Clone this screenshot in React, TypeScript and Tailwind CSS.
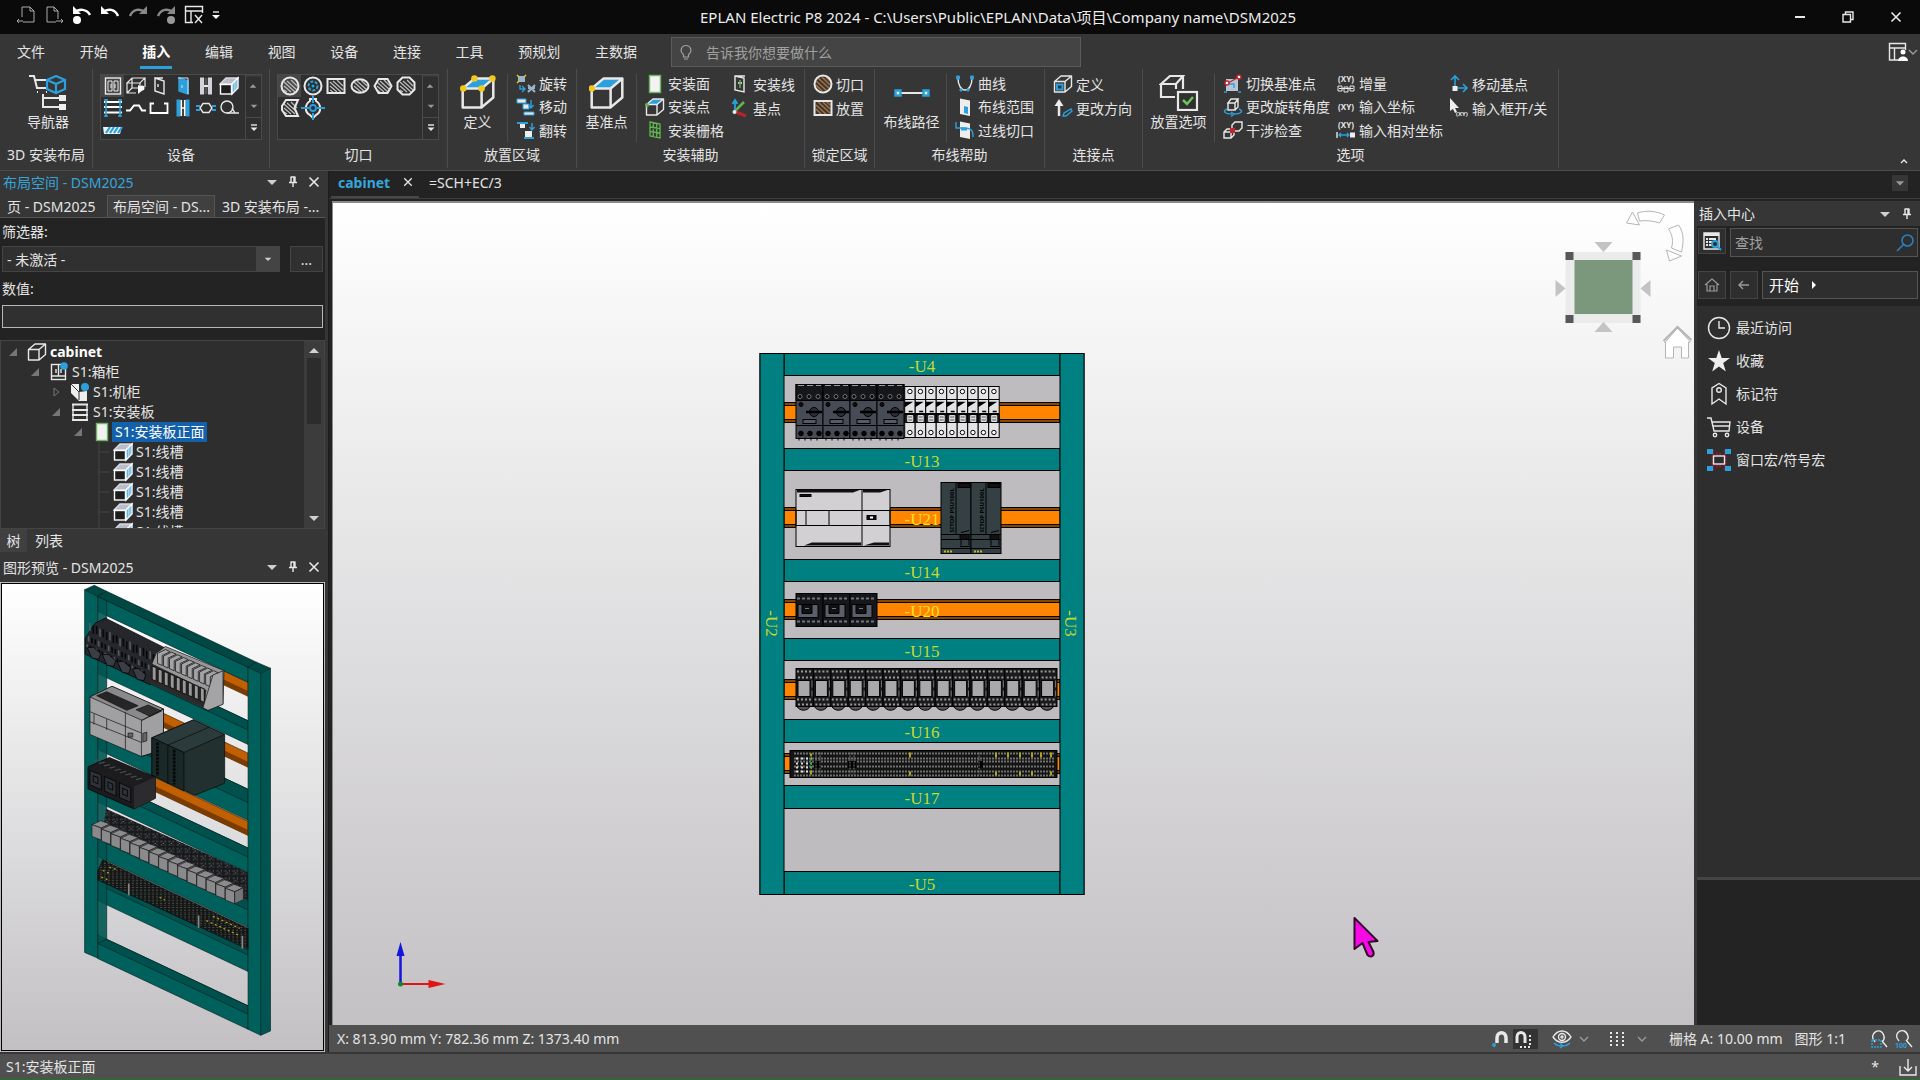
import { useState } from 'react';
import type { ReactNode } from 'react';

type IconProps = { children: ReactNode; className?: string; box?: string };

function Icon({ children, className = 'w-5 h-5', box = '0 0 20 20' }: IconProps) {
  return (
    <svg className={`${className} shrink-0`} viewBox={box} fill="none" stroke="#e8e8e8" strokeWidth="1.4" aria-hidden="true">
      {children}
    </svg>
  );
}

const BLUE = '#2ba0dc';
const menu = ['文件', '开始', '插入', '编辑', '视图', '设备', '连接', '工具', '预规划', '主数据'];

/* ---------- shared icons ---------- */

const IconPin = () => (
  <Icon className="w-3 h-3" box="0 0 12 12">
    <path d="M3.5 1h5M4 1v5M8 1v5M7 1v5M2 6.5h8M6 7v4" />
  </Icon>
);

const IconClose = ({ className = 'w-3 h-3' }) => (
  <Icon className={className} box="0 0 12 12"><path d="M1.5 1.5l9 9M10.5 1.5l-9 9" strokeWidth="1.6" /></Icon>
);

const IconCaret = ({ className = 'w-3 h-3', fill = '#d0d0d0' }) => (
  <Icon className={className} box="0 0 12 12"><path d="M1 4h10L6 9z" fill={fill} stroke="none" /></Icon>
);

const IconChevron = ({ up = false }) => (
  <Icon className="w-2.5 h-2.5" box="0 0 10 10"><path d={up ? 'M2 7l3-3 3 3' : 'M1 3l4 4 4-4'} stroke={up ? '#e8e8e8' : '#999'} /></Icon>
);

const Cube = ({ top = 'none', dot = false, stroke = '#e8e8e8' }) => (
  <g stroke={stroke} strokeLinejoin="round">
    <path d="M1.5 7.5L8 2h10.5L12 7.5z" fill={top} />
    <path d="M1.5 7.5V18H12V7.5M12 18l6.500-5.500V2" />
    {dot && <circle cx="1.5" cy="7.5" r="1.8" fill="#f4c81e" stroke="none" />}
  </g>
);

const IconDuct = () => (
  <Icon className="w-5 h-5">
    <path d="M1 8l6-6h12l-6 6z" fill="#b9bcc9" stroke="#d8dae2" />
    <path d="M13 8l6-6v10l-6 6z" fill={BLUE} stroke="#fff" />
    <path d="M15.200 6v10M17 4.500v9" strokeWidth="1" />
    <rect x="1.5" y="8.5" width="11" height="9.5" fill="#1e1e1e" stroke="#fff" />
  </Icon>
);

/* ---------- galleries ---------- */

const deviceIcons: ReactNode[] = [
  <Icon><rect x="2.5" y="2" width="15" height="16" /><path d="M5 5h4v10H5zM11 5h4v10h-4zM8 8v4M12 8v4" strokeWidth="1" /></Icon>,
  <Icon><path d="M1 7l5-5h13l-5 5zM1 7v10h9M14 7v4M19 2v9M6 2v10l-5 5M6 12h6" strokeWidth="1.2" /><path d="M12 9l6 4-6 5z" fill="#fff" stroke="none" /><circle cx="16" cy="12" r="2.5" fill="#fff" stroke="none" /></Icon>,
  <Icon><path d="M6 2l9 3v13l-9-3zM6 2h8M9 8v3" /></Icon>,
  <Icon><path d="M6 2l9 3v13l-9-3z" fill={BLUE} stroke={BLUE} /><path d="M5 2h10v16M9 9v3" stroke="#d8ecf8" strokeWidth="1" /></Icon>,
  <Icon><path d="M6 1.500v17M14 1.500v17" stroke="#d3d3dc" strokeWidth="4" /><path d="M10 2v16" stroke="#555" strokeWidth="3" /><path d="M8 10h4" strokeWidth="2" /></Icon>,
  <IconDuct />,
  <Icon><path d="M1 4h18M1 9h18M1 14.500h18" stroke="#fff" strokeWidth="2" /><path d="M3 1v18M17 1v18M1 2h4M1 18h4M15 2h4M15 18h4" stroke={BLUE} strokeWidth="1.6" /></Icon>,
  <Icon><path d="M0 12.500h4l4-5h5l3 5h4" strokeWidth="2" stroke="#fff" /></Icon>,
  <Icon><path d="M5 5.500H1.500V15h17V5.500H15" stroke="#fff" strokeWidth="1.8" /></Icon>,
  <Icon><path d="M5.500 1.500v17M14.500 1.500v17" stroke={BLUE} strokeWidth="4" /><path d="M8.300 2v16M11.700 2v16M8 10h4" stroke="#fff" strokeWidth="1.6" /></Icon>,
  <Icon><path d="M4 10l3-4.500h6l3 4.500-3 4.500H7z" /><path d="M0 8h4M0 12h4M16 8h4M16 12h4" stroke={BLUE} strokeWidth="2" /></Icon>,
  <Icon><circle cx="8" cy="9" r="6" /><path d="M8 15h12M13 10l3 5" /></Icon>,
  <Icon><path d="M0 7h19l-2 7H1z" fill="#e8f4fb" stroke="none" /><path d="M3 13l4-6M7 13l4-6M11 13l4-6M15 13l4-6" stroke={BLUE} strokeWidth="2.2" /></Icon>,
];

const hatch = <path d="M4 6l11 10M4 10l7 6M7 5l10 9M11 4l6 6M4 14l3 2" strokeWidth="1.3" stroke="#bbb" />;

const cutoutIcons: ReactNode[] = [
  <Icon>{hatch}<circle cx="10" cy="10" r="8.5" strokeWidth="2" /></Icon>,
  <Icon><circle cx="10" cy="10" r="8.5" strokeWidth="2" /><circle cx="10" cy="10" r="4.5" stroke={BLUE} strokeDasharray="3 1.5" strokeWidth="2" /><circle cx="10" cy="10" r="1.5" fill={BLUE} stroke="none" /></Icon>,
  <Icon>{hatch}<rect x="1.5" y="3" width="17" height="14" strokeWidth="2" /></Icon>,
  <Icon>{hatch}<ellipse cx="10" cy="10" rx="8.5" ry="6.8" strokeWidth="2" /></Icon>,
  <Icon>{hatch}<path d="M1.500 10l4-7h9l4 7-4 7h-9z" strokeWidth="2" /></Icon>,
  <Icon>{hatch}<path d="M6.500 1.500h7l5 5v7l-5 5h-7l-5-5v-7z" strokeWidth="2" /></Icon>,
  <Icon>{hatch}<path d="M6 2h12l-3.500 8L18 18H6l-4-6V8z" strokeWidth="2" /></Icon>,
  <Icon className="w-6 h-6" box="0 0 24 24"><path d="M9 5V3h6v2c5 3 6 11 0 14l-3 3-3-3c-6-3-5-11 0-14z" strokeWidth="2" /><circle cx="12" cy="12" r="3" stroke={BLUE} strokeWidth="1.8" /><path d="M0 12h8M16 12h8M12 0v7M12 17v7" stroke={BLUE} strokeWidth="2" /></Icon>,
];

function Gallery({ icons, label }: { icons: ReactNode[]; label: string }) {
  return (
    <div className="flex justify-between border border-[#4a4a4a] bg-[#2f2f2f] h-[66px] w-[162px]" aria-label={label}>
      <div className="grid grid-cols-6 auto-rows-[22px] w-[140px]">
        {icons.map((icon, i) => (
          <button key={i} className={`flex items-center justify-center ${i === 0 ? 'bg-[#474747]' : ''}`}>{icon}</button>
        ))}
      </div>
      <div className="grid grid-rows-3 w-4 border-l border-[#4a4a4a] divide-y divide-[#4a4a4a]">
        <button className="flex items-center justify-center rotate-180"><IconCaret className="w-2 h-2" fill="#999" /></button>
        <button className="flex items-center justify-center"><IconCaret className="w-2 h-2" fill="#999" /></button>
        <button className="flex items-center justify-center">
          <Icon className="w-2.5 h-2.5" box="0 0 10 10"><path d="M2 2h6" /><path d="M1.500 4.500h7L5 8z" fill="#e8e8e8" stroke="none" /></Icon>
        </button>
      </div>
    </div>
  );
}

/* ---------- ribbon ---------- */

function Small({ icon, text }: { icon: ReactNode; text: string }) {
  return (
    <button className="flex items-center gap-[3px] h-6 whitespace-nowrap">
      <Icon>{icon}</Icon>
      <span>{text}</span>
    </button>
  );
}

function Big({ icon, text, className = 'w-[59px]' }: { icon: ReactNode; text: string; className?: string }) {
  return (
    <button className={`flex flex-col items-center gap-px pt-[3px] whitespace-nowrap ${className}`}>
      {icon}
      <span className="leading-5">{text}</span>
    </button>
  );
}

function Group({ title, className, children }: { title: string; className: string; children: ReactNode }) {
  return (
    <section className={`flex flex-col border-r border-[#4c4c4c] h-[99px] shrink-0 ${className}`}>
      <div className="flex items-start pt-[3px] h-[76px]">{children}</div>
      <h2 className="text-center leading-5 whitespace-nowrap">{title}</h2>
    </section>
  );
}

const Items = ({ children, line = false }: { children: ReactNode; line?: boolean }) => (
  <div className={`flex gap-[6px] pl-2 h-[68px] mt-[2px] ${line ? 'border-l border-[#4c4c4c]' : ''}`}>{children}</div>
);

const Col = ({ children }: { children: ReactNode }) => <div className="flex flex-col items-start -mt-[2px]">{children}</div>;

const xy = (y: number) => (
  <text x="10" y={y} fontSize="8" fontWeight="700" textAnchor="middle" fill="#e8e8e8" stroke="none">(XY)</text>
);

const rustHatch = <path d="M3 7l11 10M3 11l6 6M5 4l12 11M9 3l8 8M13 3l4 4" stroke="#a8703c" strokeWidth="1.6" />;

const boxes = (
  <path d="M1 2h9v4H1zM7 7h6v5H7zM8 15h10v3H8z" fill="#e8e8e8" stroke={BLUE} strokeWidth="1" />
);

function Ribbon() {
  return (
    <div className="flex items-start h-[101px]">
      <Group title="3D 安装布局" className="w-[93px]">
        <Big
          className="w-full pl-1"
          text="导航器"
          icon={
            <Icon className="w-10 h-9" box="0 0 40 36">
              <path d="M1 1h5l3 12h9M7 5h11M9 17h1M18 17h1" strokeWidth="2" />
              <path d="M19 5l9-4 9 4v9l-9 4-9-4zM19 5l9 4 9-4M28 9v9" stroke={BLUE} strokeWidth="2.2" />
              <path d="M15 19v13h16M15 23h16" strokeWidth="2" />
              <path d="M31 20h7v6h-7zM31 29h7v6h-7z" fill="#eee" stroke="none" />
            </Icon>
          }
        />
      </Group>
      <Group title="设备" className="w-[177px] px-[7px]">
        <div className="pt-[2px]"><Gallery icons={deviceIcons} label="设备" /></div>
      </Group>
      <Group title="切口" className="w-[178px] px-[7px]">
        <div className="pt-[2px]"><Gallery icons={cutoutIcons} label="切口" /></div>
      </Group>
      <Group title="放置区域" className="w-[129px]">
        <Big
          text="定义"
          icon={
            <Icon className="w-9 h-9">
              <Cube top={BLUE} />
              <g fill="#f4c81e" stroke="none">
                <circle cx="1.8" cy="7.5" r="1.8" /><circle cx="12" cy="7.5" r="1.8" /><circle cx="8" cy="2" r="1.8" /><circle cx="18" cy="2" r="1.8" />
              </g>
            </Icon>
          }
        />
        <Items line>
          <Col>
            <Small text="旋转" icon={<><rect x="2" y="2" width="7" height="6" fill="#9ab4cc" stroke="none" /><path d="M1 1l2 2M10 1L8 3M1 9l2-2" stroke="#f4c81e" /><path d="M4 11v4h5M6 12l3 3-3 3" stroke={BLUE} /><path d="M12 11l7 7M19 11l-7 7M12 14h7" stroke="#9ab4cc" strokeWidth="2" /></>} />
            <Small text="移动" icon={<>{boxes}<path d="M15 3v7M12.500 8l2.500 3 2.500-3" stroke={BLUE} /></>} />
            <Small text="翻转" icon={<><path d="M1 3h11M8 18h10" stroke={BLUE} strokeWidth="2" /><rect x="4" y="4" width="5" height="4" fill="#eee" stroke="none" /><rect x="9" y="11" width="7" height="6" fill="#eee" stroke="none" /><path d="M16 3v6M13.500 7l2.500 3 2.500-3" stroke={BLUE} /></>} />
          </Col>
        </Items>
      </Group>
      <Group title="安装辅助" className="w-[228px]">
        <Big text="基准点" icon={<Icon className="w-9 h-9"><Cube top={BLUE} dot /></Icon>} />
        <Items line>
          <Col>
            <Small text="安装面" icon={<rect x="4.5" y="1.5" width="11" height="17" fill="#f2f2f2" stroke="#6cb860" />} />
            <Small text="安装点" icon={<><Cube top={BLUE} /><circle cx="2" cy="8" r="2" fill="#5fb84f" stroke="none" /></>} />
            <Small text="安装栅格" icon={<path d="M5 2l10 2v14L5 16zM8.300 2.500v14M11.700 3.500v14M5 7l10 1.500M5 11.500l10 1.500" stroke="#5fb84f" strokeWidth="1.3" />} />
          </Col>
          <Col>
            <Small text="安装线" icon={<><path d="M5 2h10M5 2v14l9 2V4zM8 9h4" /><path d="M10 6v8" stroke="#5fb84f" /></>} />
            <Small text="基点" icon={<><path d="M4 14L14 4" stroke="#5fb84f" strokeWidth="2.5" /><path d="M5 14V3M2.500 6L5 2l2.500 4" stroke={BLUE} strokeWidth="1.8" /><path d="M6 14l10 4" stroke="#b8242c" strokeWidth="3.5" /><circle cx="4.5" cy="14" r="2" fill="#eee" stroke="none" /></>} />
          </Col>
        </Items>
      </Group>
      <Group title="锁定区域" className="w-[70px]">
        <Items>
          <Col>
            <Small text="切口" icon={<>{rustHatch}<circle cx="10" cy="10" r="8.5" strokeWidth="2" /></>} />
            <Small text="放置" icon={<>{rustHatch}<rect x="1.5" y="3" width="17" height="14" strokeWidth="2" /></>} />
          </Col>
        </Items>
      </Group>
      <Group title="布线帮助" className="w-[170px]">
        <Big
          className="w-[71px] pl-[2px]"
          text="布线路径"
          icon={
            <Icon className="w-10 h-9" box="0 0 40 36">
              <path d="M8 18h24" strokeWidth="2" />
              <path d="M3.500 15.500h5v5h-5zM31.500 15.500h5v5h-5z" fill="#eee" stroke={BLUE} strokeWidth="2.5" />
            </Icon>
          }
        />
        <Items line>
          <Col>
            <Small text="曲线" icon={<><path d="M3 4c0 16 14 16 14 0" /><path d="M1.500 2h3v3h-3zM15.500 2h3v3h-3zM5 15h2v2H5zM12 15h2v2h-2z" fill={BLUE} stroke={BLUE} strokeWidth="1" /></>} />
            <Small text="布线范围" icon={<><path d="M5 1.500l10 2V19L5 17z" fill="#eee" stroke="none" /><path d="M9 9l4 1v7l-4-1z" fill={BLUE} stroke="none" /></>} />
            <Small text="过线切口" icon={<><path d="M5 1.500l10 2V19L5 17z" fill="#eee" stroke="none" /><path d="M1 2v6h8c8 0 9 3 9 9" stroke={BLUE} /><path d="M6 9h6" stroke={BLUE} strokeWidth="3" /></>} />
          </Col>
        </Items>
      </Group>
      <Group title="连接点" className="w-[98px]">
        <Items>
          <Col>
            <Small text="定义" icon={<><Cube /><rect x="4" y="10.5" width="5.5" height="5" stroke={BLUE} strokeWidth="2" /></>} />
            <Small text="更改方向" icon={<><path d="M6 18V7" strokeWidth="2.5" /><path d="M1.500 8L6 1l4.500 7z" fill="#eee" stroke="none" /><path d="M10 18l1-3 7-4 1 2-6 5z" stroke={BLUE} /></>} />
          </Col>
        </Items>
      </Group>
      <Group title="选项" className="w-[416px]">
        <Big
          className="w-[71px]"
          text="放置选项"
          icon={
            <Icon className="w-10 h-9" box="0 0 40 36">
              <path d="M2 9l9-8h13l-7 8zM2 9v13h14M24 1v13M17 9v5" strokeWidth="2.2" />
              <rect x="19" y="17" width="19" height="18" fill="#303030" strokeWidth="2.2" />
              <path d="M24 25l4 4 6-7" stroke="#6cc45a" strokeWidth="2.5" />
            </Icon>
          }
        />
        <Items line>
          <Col>
            <Small text="切换基准点" icon={<><path d="M3 5h12v12H3z" fill="#b8c4d4" stroke="none" /><path d="M1 18h3M15 18h3M6 10h5v4" stroke={BLUE} /><path d="M5 9l11-6" stroke="#c4242c" /><circle cx="4" cy="9" r="2" fill="#fff" stroke="#c4242c" /><circle cx="16" cy="3" r="2" fill="#fff" stroke="#c4242c" /></>} />
            <Small text="更改旋转角度" icon={<><path d="M5 6l3-4h7l-3 4zM5 6v7h7V6M12 13l3-3V2" /><path d="M4 12c-5 2-2 5 5 5M16 12c5 2 2 5-5 5M8 15l3 2-3 2.500" stroke={BLUE} /></>} />
            <Small text="干涉检查" icon={<><path d="M1 12l3-3h7v6l-3 3H1zM8 18v-6H1M9 5l3-3h7v6l-3 3H9z" /><path d="M7 8h5v5H7z" fill="#c4242c" stroke="none" /></>} />
          </Col>
          <Col>
            <Small text="增量" icon={<>{xy(8)}<path d="M2 12h4v5H2zM8 13h4v5H8zM14 12h4v5h-4zM3 14.500h14" strokeWidth="1" /></>} />
            <Small text="输入坐标" icon={xy(13)} />
            <Small text="输入相对坐标" icon={<>{xy(8)}<path d="M1 12v6" /><path d="M3 15h9M5 13l-2 2 2 2M11 13l2 2-2 2" stroke={BLUE} /><rect x="14" y="12.5" width="5" height="5" fill="#eee" stroke="none" /></>} />
          </Col>
          <Col>
            <Small text="移动基点" icon={<><path d="M6 13V3M2 6l4-4 4 4M8 14h10M14 10l4 4-4 4" stroke={BLUE} strokeWidth="1.6" /><rect x="3.5" y="12" width="5" height="5" fill="#eee" stroke="none" /></>} />
            <Small text="输入框开/关" icon={<><path d="M1 0v13l3-2 2 4 2-1-2-4h4z" fill="#eee" stroke="none" /><text x="13" y="18" fontSize="6" fontWeight="700" textAnchor="middle" fill="#e8e8e8" stroke="none">(XY)</text></>} />
          </Col>
        </Items>
      </Group>
      <div className="flex-1 flex justify-end items-end self-stretch pr-[11px] pb-1">
        <button aria-label="折叠功能区"><IconChevron up /></button>
      </div>
    </div>
  );
}

function TitleBar() {
  return (
    <header className="flex items-center h-[34px] bg-[#0a0a0a] shrink-0">
      <div className="flex items-center gap-2 pl-4 pb-1">
        <Icon><path d="M6 12V2h8l4 4v11H7M14 2v4h4M1 16h6M3 14l-2 2 2 2" stroke="#aaa" strokeWidth="1" /></Icon>
        <Icon><path d="M12 17H3V2h7l4 4v8M10 2v4h4M12 16h7M17 14l2 2-2 2" stroke="#aaa" strokeWidth="1" /></Icon>
        <Icon><path d="M2 8c5-5 13-4 16 2" stroke="#fff" strokeWidth="2.5" /><path d="M1 1v8h8z" fill="#fff" stroke="none" /><circle cx="5" cy="15" r="4" fill="#fff" stroke="none" /></Icon>
        <Icon><path d="M3 7c5-4 12-3 15 4" stroke="#fff" strokeWidth="2.5" /><path d="M1 1v8h8z" fill="#fff" stroke="none" /></Icon>
        <Icon><path d="M17 7C12 3 5 4 2 11" stroke="#888" strokeWidth="2.5" /><path d="M19 1v8h-8z" fill="#888" stroke="none" /></Icon>
        <Icon><path d="M17 7C12 3 5 4 2 11" stroke="#888" strokeWidth="2.5" /><path d="M19 1v8h-8z" fill="#888" stroke="none" /><circle cx="15" cy="15" r="4" fill="#999" stroke="none" /></Icon>
        <Icon><path d="M18.500 8V1.500h-17v16H9M1.500 6h17M7 6v12M11 10l7 8M18 10l-7 8" /></Icon>
        <Icon className="w-2 h-3" box="0 0 8 12"><path d="M1 3h6" /><path d="M0 6h8L4 10z" fill="#fff" stroke="none" /></Icon>
      </div>
      <h1 className="flex-1 text-center text-[15px] leading-[34px] text-[#ededed] truncate">
        EPLAN Electric P8 2024 - C:\Users\Public\EPLAN\Data\项目\Company name\DSM2025
      </h1>
      <div className="flex">
        <button className="w-12 h-[34px] flex items-center justify-center" aria-label="最小化"><Icon className="w-3 h-3" box="0 0 12 12"><path d="M1 6h10" strokeWidth="2" /></Icon></button>
        <button className="w-12 h-[34px] flex items-center justify-center" aria-label="还原"><Icon className="w-3 h-3" box="0 0 12 12"><path d="M1 3.500h7.500V11H1zM3.500 3V1H11v7.500H9" /></Icon></button>
        <button className="w-12 h-[34px] flex items-center justify-center" aria-label="关闭"><IconClose /></button>
      </div>
    </header>
  );
}

function MenuBar() {
  return (
    <nav className="flex items-center h-[34px]">
      <div className="flex justify-between w-[639px] pl-[15px] self-stretch">
        {menu.map((m) => (
          <button
            key={m}
            className={`px-[2px] pt-px whitespace-nowrap border-b-[3px] ${m === '插入' ? 'border-[#2ba0dc] font-bold text-white' : 'border-transparent'}`}
          >
            {m}
          </button>
        ))}
      </div>
      <label className="flex items-center gap-3 ml-8 pl-[6px] w-[410px] h-[30px] bg-[#444] border border-[#5a5a5a]">
        <Icon className="w-4 h-4" box="0 0 16 16"><path d="M5.500 10.500C1 7 3.500 1.500 8 1.500s7 5.500 2.500 9V13h-5zM6 15h4" stroke="#a0a0a0" strokeWidth="1.2" /></Icon>
        <input className="bg-transparent flex-1 outline-none placeholder-[#a0a0a0]" placeholder="告诉我你想要做什么" />
      </label>
      <button className="flex items-center ml-auto pr-[2px]" aria-label="工作区">
        <Icon><path d="M17.500 8V1.500h-16V18H10M1.500 6h16M6.500 6v12" /><circle cx="15" cy="10" r="2.5" fill="#fff" stroke="none" /><path d="M10 19c0-6 10-6 10 0z" fill="#fff" stroke="none" /></Icon>
        <IconChevron />
      </button>
    </nav>
  );
}

/* ---------- left column ---------- */

function PanelHead({ title, active = false }: { title: string; active?: boolean }) {
  return (
    <div className="flex items-center h-[22px] pl-[3px] pr-[5px] shrink-0">
      <h2 className={`flex-1 ${active ? 'text-[#35a5dc]' : ''}`}>{title}</h2>
      <div className="flex gap-[9px] items-center">
        <button aria-label="菜单"><IconCaret /></button>
        <button aria-label="固定"><IconPin /></button>
        <button aria-label="关闭"><IconClose /></button>
      </div>
    </div>
  );
}

type TreeRow = { text: string; pad: string; arrow?: 'open' | 'closed'; icon: ReactNode; bold?: boolean; selected?: boolean };

const duct: TreeRow = { text: 'S1:线槽', pad: 'pl-[89px]', icon: <IconDuct /> };

const tree: TreeRow[] = [
  { text: 'cabinet', pad: 'pl-[3px]', arrow: 'open', bold: true, icon: <Icon><Cube /></Icon> },
  { text: 'S1:箱柜', pad: 'pl-[25px]', arrow: 'open', icon: <Icon><rect x="2.5" y="2.5" width="14" height="15" /><path d="M2.500 14h14M9.500 3v11M7 7v4M12 7v4" /><circle cx="15" cy="4" r="3.8" fill={BLUE} stroke="none" /></Icon> },
  { text: 'S1:机柜', pad: 'pl-[46px]', arrow: 'closed', icon: <Icon><path d="M1 2h8v8l8-1v10h-8l-8-8z" fill="#eee" stroke="none" /><path d="M9 18v-8L1 2" stroke="#333" strokeWidth="1" /><circle cx="15" cy="5" r="4" fill={BLUE} stroke="none" /></Icon> },
  { text: 'S1:安装板', pad: 'pl-[46px]', arrow: 'open', icon: <Icon><path d="M3 2v16M17 2v16" /><path d="M2 2.500h16M2 8h16M2 13h16M2 18h16" strokeWidth="2" /></Icon> },
  { text: 'S1:安装板正面', pad: 'pl-[68px]', arrow: 'open', selected: true, icon: <Icon><rect x="4.5" y="1.5" width="11" height="17" fill="#f2f2f2" stroke="#6cb860" /></Icon> },
  duct, duct, duct, duct, duct,
];

function Tree() {
  return (
    <div className="flex h-[189px] border border-[#444] bg-[#2e2e2e] overflow-hidden shrink-0">
      <ul className="flex-1 pt-px">
        {tree.map((row, i) => (
          <li key={i} className={`flex items-center gap-[3px] h-5 ${row.pad}`}>
            <svg className="w-5 h-5 shrink-0" viewBox="0 0 20 20" fill="none" stroke="#777">
              {row.arrow === 'open' && <path d="M13 6v8H5z" fill="#777" stroke="none" />}
              {row.arrow === 'closed' && <path d="M7 6v8l5-4z" />}
              {!row.arrow && <path d="M9 0v20M9 10h10" stroke="#444" />}
            </svg>
            {row.icon}
            <span className={`leading-5 whitespace-nowrap ${row.bold ? 'font-bold text-white' : ''} ${row.selected ? 'bg-[#1461ab] px-[3px] -ml-[3px] text-white' : ''}`}>{row.text}</span>
          </li>
        ))}
      </ul>
      <div className="w-5 flex flex-col items-center justify-between py-1 bg-[#3c3c3c]">
        <button className="rotate-180" aria-label="向上"><IconCaret /></button>
        <div className="flex-1 w-full px-[3px]"><div className="h-[66px] mt-px bg-[#2c2c2c]" /></div>
        <button aria-label="向下"><IconCaret /></button>
      </div>
    </div>
  );
}

const range = (n: number) => Array.from({ length: n }, (_, i) => i);

/* isometric view of the mounting plate */
function PreviewDrawing() {
  const slope = 0.471;
  const beam = (key: string, top: number, mid: number, bottom: number) => (
    <g key={key} stroke="#052524" strokeWidth="2">
      <path d={`M295 ${top}L745 ${top + 212}V${bottom + 212}L295 ${bottom}z`} fill="#00605c" />
      <path d={`M295 ${top}L745 ${top + 212}V${mid + 212}L295 ${mid}z`} fill="#00504d" />
    </g>
  );
  const rail = (x: number, y: number) => (
    <g key={y}>
      <path d={`M${x} ${y + (x - 745) * slope}L745 ${y}V${y + 42}L${x} ${y + 42 + (x - 745) * slope}z`} fill="#c06000" stroke="#3c1c00" strokeWidth="2" />
      <path d={`M${x} ${y + 26 + (x - 745) * slope}L745 ${y + 26}V${y + 42}L${x} ${y + 42 + (x - 745) * slope}z`} fill="#7a3c00" />
    </g>
  );
  return (
    <svg className="w-full h-full" viewBox="9 28 960 1394" preserveAspectRatio="xMidYMid meet" aria-label="图形预览">
      <defs>
        <pattern id="isoParts" width="24" height="22" patternUnits="userSpaceOnUse">
          <rect width="24" height="22" fill="#17191b" />
          <path d="M2 4h8v5H2zM15 2h4v8h-4zM4 14h5v5H4zM13 15h8v3h-8z" fill="#3e4246" />
          <path d="M10 11h3v2h-3z" fill="#a4a8ac" />
        </pattern>
        <pattern id="isoTerminals" width="12" height="20" patternUnits="userSpaceOnUse">
          <rect width="12" height="20" fill="#141615" />
          <path d="M2 2h5v3H2zM2 9h5v2H2zM2 15h6v2H2z" fill="#5d605c" />
        </pattern>
      </defs>
      {rail(640, 322)}
      {rail(460, 534)}
      {rail(440, 738)}
      {beam('t', 50, 65, 110)}
      {beam('a', 225, 253, 296)}
      {beam('b', 430, 470, 523)}
      {beam('c', 606, 633, 680)}
      {beam('d', 740, 791, 843)}
      {beam('e', 910, 926, 975)}
      {beam('f', 1078, 1103, 1148)}
      <g stroke="#052524" strokeWidth="2">
        <path d="M295 65l27 13v1012l-27 13z" fill="#005552" fillOpacity=".9" />
        <path d="M256 45l39 20v1082l-39-17z" fill="#00605c" />
        <path d="M256 45l29-13 37 18-27 15z" fill="#004844" />
        <path d="M322 50l448 212-25 15L295 65z" fill="#004844" />
        <path d="M745 277l38 18v1083l-38-18z" fill="#00605c" />
        <path d="M783 295l29-15v1085l-29 13z" fill="#005552" />
        <path d="M745 277l25-15 42 18-29 15z" fill="#004844" />
      </g>

      {/* motor protection switches and breakers */}
      <path d="M258 190l30-45 30-15 150 75 30 15-45 110-195-92z" fill="#25272c" stroke="#000" strokeWidth="2" />
      <g transform="matrix(1 .471 0 1 0 0)">
        {range(20).map((i) => <path key={i} d={`M${272 + i * 10} ${16 + (i % 2) * 4}v24M${268 + i * 10} 58v16M${264 + i * 9} 84v10`} stroke={i % 3 ? '#070809' : '#555961'} strokeWidth="5" />)}
        {range(4).map((i) => <path key={i} d={`M${264 + i * 45} 94l18-10 22 9-6 20-20 6z`} fill="#3a3c46" stroke="#000" strokeWidth="2" />)}
      </g>
      <path d="M470 235l28-20 175 72-3 100-45 18-172-80 5-60z" fill="#98989a" stroke="#111" strokeWidth="2" />
      <path d="M455 265l165 80-5 55-162-75z" fill="#2a2a2b" />
      <g transform="matrix(1 .44 0 1 0 0)">
        {range(9).map((i) => (
          <g key={i}>
            <path d={`M${474 + i * 18} 27l24-22h14l-24 22v30h-14z`} fill="#a4a4a6" stroke="#111" strokeWidth="2" />
            <path d={`M${458 + i * 18} 72h12v40h-12z`} fill="#999" stroke="#111" strokeWidth="3" />
          </g>
        ))}
      </g>
      <path d="M640 300l30-12v100l-45 18-15-8z" fill="#a4a4a6" stroke="#111" strokeWidth="2" />

      {/* controller */}
      <g stroke="#111" strokeWidth="2">
        <path d="M272 366l66-32 154 68v122l-66 20-154-66z" fill="#a09fa1" />
        <path d="M272 366l66-32 154 68-64 34z" fill="#8a898b" />
        <path d="M292 362l30-12 94 42-34 14z" fill="#252526" />
        <path d="M410 404l36-14 40 18-34 16z" fill="#303031" />
        <path d="M426 436l66-34v122l-66 20zM378 412v110M272 410l154 64M272 440l154 62M284 416v32M322 432v32" fill="none" />
        <path d="M386 474h14v12h-14zM430 475l12-4v26l-12 4z" fill="#666" />
      </g>

      {/* power supplies */}
      <g stroke="#050808" strokeWidth="2">
        <path d="M457 488l125-54 93 44v146l-90 36-128-60z" fill="#223030" />
        <path d="M457 488l125-54 93 44-122 54z" fill="#2b3a3a" />
        <path d="M457 488l96 44v115l-96-47z" fill="#1b2828" />
        <path d="M505 510l124-54M505 510v116" fill="none" />
        <path d="M474 502v100M524 524v104" fill="none" strokeWidth="8" strokeDasharray="8 3" />
      </g>

      {/* contactors */}
      <path d="M266 575l64-28 138 58v64l-64 32-138-60z" fill="#1c1c1e" stroke="#000" strokeWidth="2" />
      <path d="M404 634l64-29v64l-64 32z" fill="#2c2c2e" />
      <g transform="matrix(1 .43 0 1 0 0)">
        {range(3).map((i) => <path key={i} d={`M${272 + i * 44} 468h34v44h-34zM${282 + i * 44} 480h14v18h-14z`} fill="#2e3138" stroke="#0a0a0a" strokeWidth="3" />)}
        {range(9).map((i) => <path key={i} d={`M${300 + i * 16} 425l-18 12`} stroke="#4b4b4e" strokeWidth="3" />)}
      </g>

      {/* relays */}
      <path d="M320 700l425 190v85l-435-205z" fill="url(#isoParts)" />
      {range(15).map((i) => (
        <g key={i} transform={`translate(${278 + i * 28.5} ${745 + i * 13.6})`} stroke="#1a1a1a" strokeWidth="2">
          <path d="M0 3l26-12 28 10-26 12z" fill="#8b8b8d" />
          <path d="M0 3l28 10v36L0 38z" fill="#8a8a8c" />
          <path d="M28 13L54 1v36L28 49z" fill="#757577" />
        </g>
      ))}

      {/* terminal strip */}
      <path d="M310 853l435 205v62l-450-207v-25z" fill="url(#isoTerminals)" stroke="#050505" strokeWidth="2" />
      <path d="M310 885l24 10M330 875l24 8M306 905l20 8M480 965l16 8M620 1035l100 45M640 1022l80 36" stroke="#a8a020" strokeWidth="4" strokeDasharray="6 8" />
      <path d="M388 925v34M597 1020v36M728 1080v38" stroke="#888" strokeWidth="5" />
    </svg>
  );
}

function LeftColumn() {
  const [value, setValue] = useState('');

  return (
    <aside className="w-[329px] shrink-0 flex flex-col bg-[#363636] pr-[3px] border-r border-[#1c1c1c]">
      <PanelHead title="布局空间 - DSM2025" active />
      <div className="flex h-[25px] pt-[2px] border-b border-[#555] shrink-0">
        <button className="w-[107px] text-left pl-[7px] whitespace-nowrap">页 - DSM2025</button>
        <button className="w-[108px] pl-[5px] text-left whitespace-nowrap border border-b-0 border-[#555] bg-[#404040]">布局空间 - DS...</button>
        <button className="pl-[7px] text-left whitespace-nowrap">3D 安装布局 -...</button>
      </div>
      <div className="bg-[#232323] px-[2px] flex flex-col shrink-0">
        <label htmlFor="filter" className="leading-[28px]">筛选器:</label>
        <div className="flex justify-between h-[26px]">
          <div className="relative w-[278px]">
            <select id="filter" className="appearance-none w-full h-full bg-[#303030] border border-[#444] pl-1">
              <option>- 未激活 -</option>
            </select>
            <div className="absolute right-0 inset-y-0 w-6 bg-[#444] flex items-center justify-center pointer-events-none"><IconCaret className="w-2 h-2" /></div>
          </div>
          <button className="w-[33px] bg-[#303030] border border-[#444]">...</button>
        </div>
        <label htmlFor="value" className="leading-[32px] pt-px">数值:</label>
        <input id="value" value={value} onChange={(e) => setValue(e.target.value)} className="h-[23px] bg-[#303030] border border-[#b8b8b8] outline-none px-1" />
        <div className="h-3" />
      </div>
      <Tree />
      <div className="flex h-[27px] shrink-0">
        <button className="w-[27px] h-[23px] bg-[#404040]">树</button>
        <button className="w-[44px] h-[23px]">列表</button>
      </div>
      <PanelHead title="图形预览 - DSM2025" />
      <div className="flex-1 min-h-0 mt-1 border border-[#bbb] bg-black p-px">
        <div className="w-full h-full bg-linear-to-b from-white to-[#c2c0c3]"><PreviewDrawing /></div>
      </div>
    </aside>
  );
}

/* ---------- 3D view ---------- */

const ducts = [
  { name: '-U4', y: 0, h: 22 },
  { name: '-U13', y: 95, h: 22 },
  { name: '-U14', y: 206, h: 22 },
  { name: '-U15', y: 285, h: 22 },
  { name: '-U16', y: 366, h: 23 },
  { name: '-U17', y: 432, h: 23 },
  { name: '-U5', y: 518, h: 23 },
];

const rails = [49, 154, 246, 326, 400];

const labelProps = { textAnchor: 'middle', fontSize: 17, fill: '#c9d92c', stroke: 'none', fontFamily: '"Liberation Serif", serif' } as const;

function Cabinet() {
  return (
    <g stroke="#000" strokeWidth="1">
      <rect x="0" y="0" width="324" height="541" fill="#bfbcbf" />
      {rails.map((y) => (
        <g key={y}>
          <rect x="24" y={y} width="276" height="20" fill="#8a4500" />
          <rect x="24" y={y + 3} width="276" height="14" fill="#ff8400" />
        </g>
      ))}
      {ducts.map((d) => (
        <g key={d.name}>
          <rect x="24" y={d.y} width="276" height={d.h} fill="#008080" />
          <text x="162" y={d.y + 18} {...labelProps}>{d.name}</text>
        </g>
      ))}
      <rect x="0" y="0" width="24" height="541" fill="#008080" />
      <rect x="300" y="0" width="24" height="541" fill="#008080" />
      <text transform="translate(6 270) rotate(90)" {...labelProps}>-U2</text>
      <text transform="translate(305 270) rotate(90)" {...labelProps}>-U3</text>

      {/* motor protection switches */}
      {range(4).map((i) => (
        <g key={i} transform={`translate(${36 + i * 27} 31)`}>
          <rect width="27" height="54" fill="#464b56" />
          <rect width="27" height="16" fill="#15171b" />
          <path d="M2 1h6M11 1h6M20 1h5" stroke="#999" />
          <path d="M0 41h27M3 56v-3M9 56v-3M15 56v-3M21 56v-3" />
          {[4, 13, 22].map((x) => <circle key={x} cx={x} cy="12" r="2" fill="#000" stroke="#777" />)}
          {[5, 14, 23].map((x) => <circle key={x} cx={x} cy="49" r="2.3" fill="#000" />)}
          <circle cx="5" cy="20" r="2" fill="#111" />
          <circle cx="18" cy="27.5" r="4.5" fill="#2c2f36" />
          <path d="M10 27.500h16" strokeWidth="2.5" />
          <rect x="7" y="35" width="13" height="4" fill="#555b66" />
        </g>
      ))}

      {/* miniature circuit breakers */}
      {range(9).map((i) => (
        <g key={i} transform={`translate(${144.7 + i * 10.5} 33)`}>
          <rect width="10.5" height="51" fill="#e4e4e6" />
          <path d="M0 13h10.500M0 27h10.500M0 36h10.500" />
          <rect y="28" width="10.5" height="8" fill="#222" />
          <path d="M3 29h5v6H3zM3 32h5" fill="#999" stroke="#ddd" />
          <path d="M0 16h6l-6 4M4 25h4" strokeWidth="1.5" />
          <circle cx="5.2" cy="5" r="2.2" fill="#fff" />
          <circle cx="5.2" cy="46" r="2.2" fill="#fff" />
        </g>
      ))}

      {/* controller */}
      <g transform="translate(36 136)">
        <rect width="94" height="57" fill="#d2d0d3" />
        <path d="M0 21h94M0 36h94M0 20v17M66 0v57M10 21v15M33 21v15M94 20v17" />
        <path d="M1 0h64l-8 3H1zM67 0h26l-9 3H67zM8 56l8-3h49v3zM68 56l10-3h15v3z" fill="#111" stroke="none" />
        <rect x="4" y="5" width="11" height="2" fill="#111" />
        <rect x="71" y="26" width="9" height="4" fill="#111" />
        <rect x="74" y="27" width="3" height="2" fill="#fff" stroke="none" />
      </g>

      {/* power supplies */}
      {[181, 211].map((x) => (
        <g key={x} transform={`translate(${x} 129)`}>
          <rect width="30" height="71" fill="#344044" />
          <path d="M0 52h30M0 57h30M15 0v52M0 66h30M20 3h9M20 50l8-2M19 64h10M20 57v6M28 57v6" />
          <rect x="17" y="1" width="12" height="4" fill="#111" />
          <rect x="19" y="52" width="9" height="5" fill="#111" />
          <text transform="translate(13 50) rotate(-90)" fontSize="6" fontWeight="700" fill="#000" stroke="none">SITOP PSU100L</text>
          <path d="M3 69h8" stroke="#b8c020" strokeWidth="2" strokeDasharray="2 1" />
        </g>
      ))}

      {/* contactors */}
      {range(3).map((i) => (
        <g key={i} transform={`translate(${36 + i * 27} 240)`}>
          <rect width="27" height="33" fill="#15171b" />
          <path d="M1 5h25M1 28h25" stroke="#70767f" strokeWidth="2" strokeDasharray="3 2" />
          <path d="M2 11h20v13H2z" fill="#59606c" />
          <path d="M6 11h10v9H6z" fill="#101114" />
          <path d="M9 15h4" stroke="#777" />
        </g>
      ))}

      {/* relays */}
      {range(15).map((i) => (
        <g key={i} transform={`translate(${36 + i * 17.4} 315)`}>
          <rect width="17.4" height="38" fill="#1b1b1d" />
          <path d="M1 3h16M2 9h15M1 31h16M2 36h15" stroke="#9a9a9c" strokeWidth="2" strokeDasharray="2 2" />
          <path d="M1 38c3 5 10 5 13 0z" fill="#555" />
          <rect x="2" y="12" width="12" height="16" fill="#a9a9ab" />
          <path d="M16 12v7M16 22v6" stroke="#777" />
        </g>
      ))}

      {/* terminal strip */}
      <rect x="30" y="397" width="267" height="27" fill="#141414" />
      <path d="M34 400h260M34 405h260M34 408h260M34 413h260M34 418h260M34 422h260" stroke="#6f716e" strokeWidth="2" strokeDasharray="2 1" />
      <path d="M36 405h16M36 410h16M36 414h16M36 418h16" stroke="#ddd" strokeWidth="2" strokeDasharray="2 3" />
      <path d="M51 400v3M51 417v4M150 399v5M150 418v4M236 399v5M248 399v5M260 399v5M272 399v5M281 399v5M291 399v5M236 418v4M260 418v4M272 418v4M291 418v4" stroke="#b4a418" strokeWidth="2" />
      <path d="M51 405v12" stroke="#38b058" strokeWidth="2" strokeDasharray="2 2" />
      <path d="M54 411h7M88 411h8M218 411h5" strokeWidth="7" />
      <path d="M56 399v22M60 399v22M90 399v22M94 399v22M219 399v22" stroke="#777" strokeDasharray="2 1" />

      <text x="162" y="171" {...labelProps} fill="#ffe11a">-U21</text>
      <text x="162" y="263" {...labelProps} fill="#ffe11a">-U20</text>
    </g>
  );
}

function Viewport() {
  return (
    <div className="flex-1 min-w-0 border-l border-t-2 border-[#8a8a8a] bg-linear-to-b from-white to-[#c3c1c4] overflow-hidden">
      <svg className="w-full h-full" viewBox="0 0 1360 822" preserveAspectRatio="xMidYMid meet" aria-label="布局空间">
        <g transform="translate(426.5 150.5)"><Cabinet /></g>

        {/* view cube */}
        <g transform="translate(1222 31)">
          <rect x="10" y="18" width="75" height="71" fill="#ebebec" />
          <rect x="19" y="26" width="58" height="54" fill="#7b987d" />
          <path d="M10 18h8v8h-8zM77 18h8v8h-8zM10 81h8v8h-8zM77 81h8v8h-8z" fill="#58585a" />
          <path d="M39 8h18l-9 10zM39 98h18l-9-10zM0 46v17l10-8.500zM95 46v17L85 54.500z" fill="#c3c3c5" />
          <g fill="#fff" stroke="#b5b5b7">
            <path d="M71-11l6-11 7 13zM82-21c9-3 19-2 27 2l-5 8c-6-2-13-3-20-2z" />
            <path d="M113-5l10-4c6 8 5 18 3 27l-10-4c2-7 1-13-3-19zM111 16l15 6-12 5z" />
            <path d="M110 108v16h8v-11h8v11h7v-16h2l-13-14-13 15z" />
            <path d="M108 107l14-14 14 13" fill="none" strokeWidth="2" />
          </g>
        </g>

        {/* coordinate axes */}
        <g transform="translate(67 739)">
          <path d="M0 42V12" stroke="#1414e0" strokeWidth="2.5" />
          <path d="M-4 14L0 0l4 14z" fill="#1414e0" />
          <path d="M0 42h30" stroke="#e01414" strokeWidth="2" />
          <path d="M28 38l17 4-17 4z" fill="#e01414" />
          <circle cx="0" cy="42" r="2.5" fill="#0a8a2a" />
        </g>

        {/* pointer */}
        <path d="M1021 715v31l8-6 5 12c3 3 7 1 6-3l-5-10 9-1z" fill="#f70ae6" stroke="#30062c" strokeWidth="2" strokeLinejoin="round" />
      </svg>
    </div>
  );
}

/* ---------- right column ---------- */

const insertItems = [
  { text: '最近访问', icon: <><circle cx="12" cy="12" r="10.5" /><path d="M12 5v7h6" /></> },
  { text: '收藏', icon: <path d="M12 1l2.700 8H23l-6.800 5 2.600 8.500L12 17.500 5.200 22.500 7.800 14 1 9h8.300z" fill="#eee" stroke="none" /> },
  { text: '标记符', icon: <><path d="M5 22V6l7-4.500L19 6v16l-7-5z" /><circle cx="12" cy="8" r="2.3" /></> },
  { text: '设备', icon: <><path d="M0 3h4l3 13h15l1-9H5M6 11h17" /><circle cx="8" cy="20" r="1.7" /><circle cx="20" cy="20" r="1.7" /></> },
  { text: '窗口宏/符号宏', icon: <><path d="M6 2v20M18 2v20M6 12h12M9 6h6M9 18h6" stroke="#8e1c2c" strokeWidth="3" strokeDasharray="2 1" /><path d="M0 1h6v5H0zM18 1h6v5h-6zM0 18h6v5H0zM18 18h6v5h-6z" fill={BLUE} stroke="none" /><rect x="6.5" y="8" width="11" height="8" fill="#2e2e2e" /></> },
];

function InsertCenter() {
  const [query, setQuery] = useState('');

  return (
    <aside className="w-[226px] shrink-0 flex flex-col bg-[#232323] border-l-[3px] border-[#363636]">
      <div className="flex items-center h-[25px] pl-[2px] pr-[7px] bg-[#363636]">
        <h2 className="flex-1">插入中心</h2>
        <div className="flex gap-[10px] items-center">
          <button aria-label="菜单"><IconCaret /></button>
          <button aria-label="固定"><IconPin /></button>
        </div>
      </div>
      <div className="flex items-start gap-1 pt-[2px] pl-px pr-[2px]">
        <button className="w-7 h-[26px] border border-[#444] bg-[#2e2e2e] flex items-center justify-center" aria-label="查找选项">
          <Icon><path d="M2 2h15v16H2z" /><path d="M2 3.500h15" strokeWidth="3" /><path d="M4 8h2M7 8h7M4 11h2M7 11h4M4 14h2M7 14h3" strokeWidth="2" /><circle cx="13" cy="13" r="3" stroke={BLUE} strokeWidth="2" fill="#2e2e2e" /><path d="M15 15l4 4" stroke={BLUE} strokeWidth="2" /></Icon>
        </button>
        <label className="flex-1 flex items-center h-[29px] border border-[#555] bg-[#2e2e2e] pl-1 pr-[3px] min-w-0">
          <input value={query} onChange={(e) => setQuery(e.target.value)} className="flex-1 min-w-0 bg-transparent outline-none placeholder-[#a0a0a0]" placeholder="查找" />
          <Icon className="w-[18px] h-[18px]" box="0 0 18 18"><circle cx="11.5" cy="6.5" r="5.5" stroke="#2a7fc0" strokeWidth="1.6" /><path d="M7.500 10.500L1 17" stroke="#2a7fc0" strokeWidth="1.6" /></Icon>
        </label>
      </div>
      <div className="flex gap-1 pt-[14px] pb-[7px] pl-px pr-[2px]">
        <button className="w-7 h-7 border border-[#444] bg-[#2e2e2e] flex items-center justify-center" aria-label="主页">
          <Icon className="w-4 h-4" box="0 0 16 16"><path d="M1 8l7-6 7 6M3 7v7h10V7M6 14V9h4v5" stroke="#999" strokeWidth="1.2" /></Icon>
        </button>
        <button className="w-7 h-7 border border-[#444] bg-[#2e2e2e] flex items-center justify-center" aria-label="后退">
          <Icon className="w-3 h-3" box="0 0 12 12"><path d="M11 6H1M5 2L1 6l4 4" stroke="#999" /></Icon>
        </button>
        <button className="flex-1 h-7 border border-[#555] bg-[#2e2e2e] flex items-center gap-3 pl-[6px] text-[15px] text-white">
          开始
          <Icon className="w-1.5 h-2" box="0 0 6 8"><path d="M1 0l4 4-4 4z" fill="#fff" stroke="none" /></Icon>
        </button>
      </div>
      <ul className="flex-1 bg-[#2e2e2e] pt-[5px]">
        {insertItems.map((item) => (
          <li key={item.text}>
            <button className="flex items-center gap-[5px] h-[33px] pl-[10px]">
              <Icon className="w-6 h-6" box="0 0 24 24">{item.icon}</Icon>
              {item.text}
            </button>
          </li>
        ))}
      </ul>
      <div className="h-[3px] bg-[#454545]" />
      <div className="h-[145px]" />
    </aside>
  );
}

function StatusBar() {
  return (
    <div className="flex items-center h-[27px] bg-[#505050] pl-2 pr-[6px] shrink-0">
      <span className="flex-1">X: 813.90 mm Y: 782.36 mm Z: 1373.40 mm</span>
      <button aria-label="捕捉对象"><Icon><path d="M6 14V9c0-7 9-7 9 0v5" strokeWidth="3.5" /><circle cx="3" cy="16" r="2" fill={BLUE} stroke="none" /></Icon></button>
      <button className="bg-[#333] w-[25px] h-5 ml-[2px]" aria-label="捕捉栅格"><Icon className="w-5 h-5"><path d="M4 14V8c0-6 8-6 8 0v6" strokeWidth="3" /><path d="M17 6v12M7 18h12" strokeWidth="2" strokeDasharray="2 2" /></Icon></button>
      <button className="flex items-center gap-[6px] ml-[13px]" aria-label="视角">
        <Icon className="w-[22px] h-5" box="0 0 22 20"><path d="M2 8c5-8 13-8 18 0-5 7-13 7-18 0z" /><circle cx="11" cy="8" r="3.5" /><circle cx="11" cy="8" r="1" /><path d="M3 14c4 4 12 4 16 0M9 14l3 3-3 2" stroke={BLUE} /></Icon>
        <IconChevron />
      </button>
      <button className="flex items-center gap-3 ml-5" aria-label="栅格">
        <Icon className="w-4 h-4" box="0 0 16 16"><path d="M1 2h15M1 6h15M1 10h15M1 14h15" strokeWidth="2" strokeDasharray="2 4" /></Icon>
        <IconChevron />
      </button>
      <span className="ml-[22px]">栅格 A: 10.00 mm</span>
      <span className="ml-3 mr-6">图形 1:1</span>
      <button className="mr-1" aria-label="缩放窗口"><Icon><path d="M5 13c-8-8 6-17 9-6 1 3-1 5-2 6M12 12l5 6" /><path d="M2 11h9v7H2z" stroke={BLUE} strokeDasharray="2 1" /></Icon></button>
      <button aria-label="缩放 100%"><Icon><path d="M5 12c-8-8 6-16 9-5 1 3-1 4-2 5M12 11l6 7" /><text x="7" y="19" fontSize="7" fontWeight="700" textAnchor="middle" fill={BLUE} stroke="none">100</text></Icon></button>
    </div>
  );
}

export default function App() {
  return (
    <div className="h-screen flex flex-col overflow-hidden bg-[#363636] text-[#e4e4e4] text-[14px] font-['Noto_Sans','Noto_Sans_CJK_SC',sans-serif]">
      <TitleBar />
      <div className="bg-[#363636] border-b border-[#4c4c4c] pt-px shrink-0">
        <MenuBar />
        <Ribbon />
      </div>
      <div className="flex flex-1 min-h-0">
        <LeftColumn />
        <main className="flex-1 min-w-0 flex flex-col bg-[#232323]">
          <div className="flex h-[28px] border-b border-[#3c3c3c] pl-[2px] pr-3 shrink-0">
            <button className="flex items-center gap-[13px] w-[88px] pl-[7px] pb-[3px] border-b-2 border-[#484848] text-[#35a5dc] font-bold">
              cabinet
              <IconClose className="w-2.5 h-2.5" />
            </button>
            <button className="pl-[10px] pb-[5px]">=SCH+EC/3</button>
            <button className="ml-auto mt-1 w-4 h-4 bg-[#363636] flex items-center justify-center" aria-label="窗口列表"><IconCaret className="w-2.5 h-2.5" fill="#999" /></button>
          </div>
          <div className="flex flex-1 min-h-0 pt-[2px] pl-[3px]">
            <Viewport />
            <InsertCenter />
          </div>
          <StatusBar />
        </main>
      </div>
      <footer className="flex items-center h-[27px] bg-[#505050] border-t-2 border-[#363636] pl-[6px] pr-[2px] shrink-0">
        <span className="flex-1">S1:安装板正面</span>
        <span className="mr-[19px]">*</span>
        <button aria-label="下载"><Icon><path d="M2 9v9h16V9M10 2v12M6 10l4 4 4-4" /></Icon></button>
      </footer>
      <div className="h-px bg-[#1a7a1a] shrink-0" />
    </div>
  );
}
